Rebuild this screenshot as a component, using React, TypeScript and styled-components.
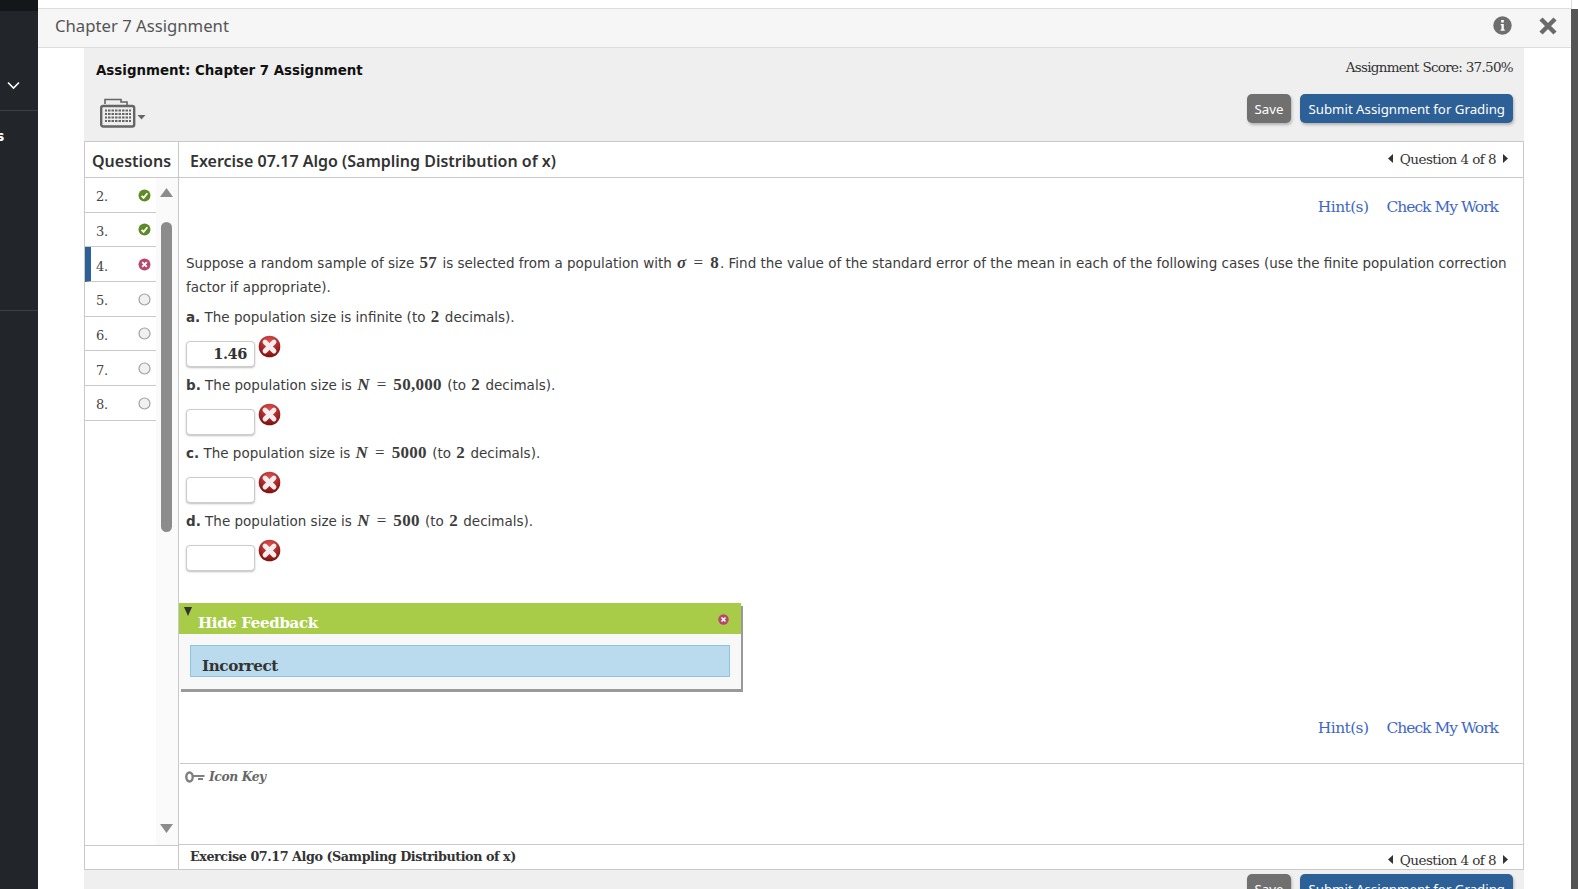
import React from "react";
import styled, { createGlobalStyle } from "styled-components";

const Global = createGlobalStyle`
  html, body { margin: 0; padding: 0; height: 889px; overflow: hidden; background: #fff; }
  * { box-sizing: border-box; }
`;

const SANS = `"Noto Sans", "Open Sans", sans-serif`;
const BODY = `"DejaVu Sans", "Noto Sans", sans-serif`;
const SERIF = `"DejaVu Serif", "Liberation Serif", serif`;
const MATHF = `"Liberation Serif", serif`;

const Shell = styled.div`display: flex; width: 1578px; height: 889px; overflow: hidden;`;
const Side = styled.aside`width: 38px; flex: none; background: #22262b; color: #fff; display: flex; flex-direction: column;`;
const SideTop = styled.div`height: 11px; background: #14171a;`;
const SideChevron = styled.div`height: 100px; border-bottom: 1px solid #3c4045; display: flex; align-items: flex-end; padding: 0 0 20px 7px; svg { display: block; }`;
const SideLabel = styled.div`height: 200px; border-bottom: 1px solid #3c4045; font: 700 14px ${BODY}; padding: 17px 0 0 0; margin-left: -4px; width: 42px;`;
const Main = styled.main`flex: 1; min-width: 0; display: flex; flex-direction: column;`;
const Strip = styled.div`width: 7px; flex: none; background: #fff; display: flex; flex-direction: column; &::after { content: ""; flex: 1; background: #555; } &::before { content: ""; height: 9px; background: #fff; border-left: 1px solid #ddd; }`;
const TopGap = styled.div`height: 8px; flex: none;`;
const TitleBar = styled.header`height: 40px; flex: none; background: #f6f6f6; border-top: 1px solid #dedede; border-bottom: 1px solid #dedede; display: flex; align-items: center; justify-content: space-between; padding: 0 14px 5px 17px;`;
const TitleText = styled.h1`margin: 0; font: 400 16.7px ${SANS}; color: #555;`;
const TitleIcons = styled.div`display: flex; align-items: center; gap: 27px; color: #6a6a6a; svg { display: block; }`;
const Content = styled.div`flex: 1; margin-left: 46px; width: 1440px; background: #efefef; display: flex; flex-direction: column;`;
const Toolbar = styled.div`height: 93px; flex: none; padding: 11px 11px 0 12px; display: grid; grid-template-columns: 1fr auto; grid-template-rows: 30px 1fr;`;
const AssignName = styled.div`font: 700 13.4px "DejaVu Sans", sans-serif; color: #111; line-height: 24px;`;
const Score = styled.div`font: 400 13.5px ${SERIF}; letter-spacing: -0.7px; color: #333; text-align: right; line-height: 17px;`;
const KeyboardBox = styled.div`display: flex; align-items: flex-start; padding: 9px 0 0 4px; svg { display: block; }`;
const Buttons = styled.div`display: flex; gap: 9px; justify-content: flex-end; padding-top: 5px; height: 34px;`;
const Btn = styled.button<{ $primary?: boolean }>`
  height: 29px; border: 0; border-radius: 5px; padding: 0 8px; color: #fff; font: 400 13.25px ${SANS};
  background: ${(p) => (p.$primary ? "#2d6097" : "#707070")}; box-shadow: 1px 2px 3px rgba(0,0,0,.25);
`;
const Panel = styled.section`height: 729px; flex: none; background: #fff; border: 1px solid #c9c9c9; display: grid; grid-template-columns: 94px 1fr; grid-template-rows: 36px 1fr;`;
const QHead = styled.div`border-right: 1px solid #c9c9c9; border-bottom: 1px solid #c9c9c9; font: 600 16px ${SANS}; color: #333; display: flex; align-items: center; padding: 2px 0 0 7px; white-space: nowrap;`;
const ExHead = styled.div`border-bottom: 1px solid #c9c9c9; display: flex; align-items: center; justify-content: space-between; padding: 2px 15px 0 11px;`;
const ExTitle = styled.h2`margin: 0; font: 600 16px ${SANS}; color: #333;`;
const Pager = styled.div`display: flex; align-items: center; gap: 7px; font: 400 13.5px ${SERIF}; letter-spacing: -0.55px; color: #333; svg { display: block; }`;
const HeadPager = styled(Pager)`margin-bottom: 4px;`;
const QCol = styled.nav`border-right: 1px solid #c9c9c9; display: flex; flex-direction: column; min-height: 0;`;
const QMain = styled.div`display: flex; flex: 1; min-height: 0;`;
const QList = styled.ul`list-style: none; margin: 0; padding: 0; width: 71px; flex: none;`;
const QRow = styled.li<{ $active?: boolean }>`
  height: 34.67px; border-bottom: 1px solid #c9c9c9; display: flex; align-items: center; justify-content: space-between;
  padding: 4px 5px 0 ${(p) => (p.$active ? "5px" : "11px")}; font: 400 13px ${SERIF}; letter-spacing: -.4px; color: #444;
  border-left: ${(p) => (p.$active ? "6px solid #2d6097" : "0")}; svg { display: block; margin-top: -3px; }
`;
const ScrollTrack = styled.div`flex: 1; background: #fafafa; display: flex; flex-direction: column; align-items: center; padding: 10px 1px 12px 0; svg { display: block; }`;
const Thumb = styled.div`width: 11px; height: 310px; border-radius: 6px; background: #8c8c8c; margin-top: 25px; flex: none;`;
const ScrollGap = styled.div`flex: 1;`;
const QFoot = styled.div`height: 24px; border-top: 1px solid #c9c9c9; flex: none;`;
const Body = styled.div`display: flex; flex-direction: column; min-height: 0;`;
const Links = styled.div<{ $top: number }>`display: flex; justify-content: flex-end; gap: 18px; padding: ${(p) => p.$top}px 25px 0 0; height: ${(p) => p.$top + 22}px; flex: none;`;
const HelpLink = styled.a`font: 400 15.5px/22px ${SERIF}; letter-spacing: -1px; color: #3f68c4; text-decoration: none;`;
const HintLink = styled(HelpLink)`letter-spacing: -.6px;`;
const Para = styled.p`margin: 33px 8px 0 7px; font: 400 13.5px/24px ${BODY}; color: #3c3c3c;`;
const Part = styled.p`margin: 0 0 0 7px; padding-top: 1px; font: 400 13.5px/24px ${BODY}; color: #3c3c3c; height: 24px;`;
const FirstPart = styled(Part)`margin-top: 5px;`;
const M = styled.span<{ $it?: boolean }>`font: ${(p) => (p.$it ? "italic 700 17px" : "700 17px")} ${MATHF}; margin: 0 1px; letter-spacing: .3px;`;
const Eq = styled.span`font: 400 17px ${MATHF}; margin: 0 6px;`;
const AnsRow = styled.div`height: 44px; flex: none; margin-left: 7px; display: flex; align-items: flex-start; gap: 3px; padding-top: 13px; svg { display: block; margin-top: -6px; }`;
const Ans = styled.div`width: 69px; height: 26px; background: #fff; border: 1px solid #ccc; border-radius: 4px; box-shadow: 0 1px 2px rgba(0,0,0,.25); font: 700 14.5px/24px "DejaVu Serif", serif; text-align: right; padding-right: 7px; color: #333; letter-spacing: -.4px;`;
const Feedback = styled.div`margin: 27px 0 0 0; width: 562px; height: 86px; flex: none; background: #f8f8f8; box-shadow: 2px 3px 0 #999; display: flex; flex-direction: column;`;
const FbHead = styled.div`height: 31px; flex: none; background: #a8cc48; display: flex; align-items: flex-end; justify-content: space-between; padding: 0 12px 0 4px; svg { display: block; }`;
const FbTitle = styled.div`display: flex; gap: 5px; align-items: flex-start; font: 700 15px/22px ${SERIF}; letter-spacing: -.35px; color: #fff; svg { margin-top: -5px; } `;
const FbClose = styled.span`display: block; margin-bottom: 9px;`;
const FbBody = styled.div`margin: 11px 11px 0 11px; height: 32px; background: #b9dbed; border: 1px solid #8cc4e3; font: 700 15.2px/40px ${SERIF}; letter-spacing: -.4px; color: #333; padding-left: 11px; overflow: hidden;`;
const KeyRow = styled.div`margin: 24px 0 0 1px; border-top: 1px solid #c9c9c9; height: 81px; flex: none; padding: 4px 0 0 5px; display: flex; align-items: flex-start; gap: 4px; color: #666; font: italic 700 12.3px/18px ${SERIF}; letter-spacing: -.4px; svg { display: block; margin-top: 3px; }`;
const Foot = styled.div`border-top: 1px solid #c9c9c9; height: 25px; flex: none; display: flex; justify-content: space-between; padding: 0 15px 0 11px;`;
const FootTitle = styled.div`font: 700 12.75px/24px ${SERIF}; letter-spacing: -.45px; color: #333;`;
const FootPager = styled(Pager)`padding-top: 5px;`;
const BottomBar = styled.div`margin-top: -1px; padding: 0 11px 0 0; overflow: hidden; flex: 1; min-height: 0;`;

const Check = () => (
  <svg width="13" height="13" viewBox="0 0 13 13"><circle cx="6.5" cy="6.5" r="6" fill="#5f8a24" /><path d="M3.6 6.8l2 2 3.800-4.600" fill="none" stroke="#fff" strokeWidth="1.800" /></svg>
);
const Wrong = () => (
  <svg width="13" height="13" viewBox="0 0 13 13"><circle cx="6.5" cy="6.5" r="6" fill="#b5486e" /><path d="M4.200 4.200l4.600 4.600M8.800 4.200l-4.600 4.600" stroke="#fff" strokeWidth="1.800" /></svg>
);
const Empty = () => (
  <svg width="13" height="13" viewBox="0 0 13 13"><circle cx="6.5" cy="6.5" r="5.500" fill="#f0f0f0" stroke="#a0a0a0" strokeWidth="1.200" /></svg>
);
const RedX = () => (
  <svg width="23" height="23" viewBox="0 0 23 23">
    <defs><radialGradient id="rx" cx="50%" cy="25%" r="80%"><stop offset="0" stopColor="#e05050" /><stop offset="1" stopColor="#780a0a" /></radialGradient></defs>
    <circle cx="11.500" cy="11.500" r="10.800" fill="url(#rx)" />
    <path d="M7 7l9 9M16 7l-9 9" stroke="#f6eeee" strokeWidth="4.800" strokeLinecap="round" />
  </svg>
);
const TriL = () => <svg width="5" height="9" viewBox="0 0 5 9"><path d="M5 0v9L0 4.500z" fill="#333" /></svg>;
const TriR = () => <svg width="5" height="9" viewBox="0 0 5 9"><path d="M0 0v9l5-4.500z" fill="#333" /></svg>;
const Keyboard = () => (
  <svg width="47" height="31" viewBox="0 0 47 31" fill="none">
    <path d="M5 6V1.500h16V4h6v3" stroke="#666" strokeWidth="1.600" />
    <rect x="1.200" y="8" width="33" height="20.500" rx="2" stroke="#666" strokeWidth="2.400" fill="#eee" />
    <path d="M5 12.500h26M5 16h26M5 19.500h26M5 23h26" stroke="#666" strokeWidth="2" />
    <path d="M7.500 11v13M11 11v13M14.500 11v13M18 11v13M21.500 11v13M25 11v13M28.500 11v13" stroke="#eee" strokeWidth="1" />
    <path d="M37.500 17h8l-4 4.500z" fill="#666" />
  </svg>
);
const Key = () => (
  <svg width="20" height="12" viewBox="0 0 20 12" fill="none"><ellipse cx="4.500" cy="6" rx="3.200" ry="4.500" stroke="#808080" strokeWidth="2.400" /><path d="M7.500 5h12M13 8h5" stroke="#808080" strokeWidth="2" /></svg>
);

const qs: { n: number; s: "ok" | "bad" | "none" }[] = [
  { n: 2, s: "ok" }, { n: 3, s: "ok" }, { n: 4, s: "bad" }, { n: 5, s: "none" }, { n: 6, s: "none" }, { n: 7, s: "none" }, { n: 8, s: "none" },
];

const Actions = () => (
  <Buttons>
    <Btn>Save</Btn>
    <Btn $primary>Submit Assignment for Grading</Btn>
  </Buttons>
);

export default function App() {
  return (
    <Shell>
      <Global />
      <Side>
        <SideTop />
        <SideChevron>
          <svg width="13" height="9" viewBox="0 0 13 9" fill="none"><path d="M1 1.500L6.500 7 12 1.500" stroke="#fff" strokeWidth="1.600" /></svg>
        </SideChevron>
        <SideLabel>s</SideLabel>
      </Side>
      <Main>
        <TopGap />
        <TitleBar>
          <TitleText>Chapter 7 Assignment</TitleText>
          <TitleIcons>
            <svg width="19" height="19" viewBox="0 0 19 19"><circle cx="9.500" cy="9.500" r="9.200" fill="#6e6e6e" /><path d="M8.200 4h2.600v2.500H8.200zM7.700 8h3.100v5.400h1v1.300H7.500v-1.300h1V9.300h-.8z" fill="#fff" /></svg>
            <svg width="18" height="18" viewBox="0 0 18 18"><path d="M2 2l14 14M16 2L2 16" stroke="#6a6a6a" strokeWidth="4.400" /></svg>
          </TitleIcons>
        </TitleBar>
        <Content>
          <Toolbar>
            <AssignName>Assignment: Chapter 7 Assignment</AssignName>
            <Score>Assignment Score: 37.50%</Score>
            <KeyboardBox><Keyboard /></KeyboardBox>
            <Actions />
          </Toolbar>
          <Panel>
            <QHead>Questions</QHead>
            <ExHead>
              <ExTitle>Exercise 07.17 Algo (Sampling Distribution of x)</ExTitle>
              <HeadPager><TriL /> Question 4 of 8 <TriR /></HeadPager>
            </ExHead>
            <QCol>
              <QMain>
                <QList>
                  {qs.map((q) => (
                    <QRow key={q.n} $active={q.s === "bad"}>
                      {q.n}.
                      {q.s === "ok" ? <Check /> : q.s === "bad" ? <Wrong /> : <Empty />}
                    </QRow>
                  ))}
                </QList>
                <ScrollTrack>
                  <svg width="13" height="9" viewBox="0 0 13 9"><path d="M6.500 0L13 9H0z" fill="#8c8c8c" /></svg>
                  <Thumb />
                  <ScrollGap />
                  <svg width="13" height="9" viewBox="0 0 13 9"><path d="M6.500 9L13 0H0z" fill="#8c8c8c" /></svg>
                </ScrollTrack>
              </QMain>
              <QFoot />
            </QCol>
            <Body>
              <Links $top={18}><HintLink>Hint(s)</HintLink><HelpLink>Check My Work</HelpLink></Links>
              <Para>
                Suppose a random sample of size <M>57</M> is selected from a population with <M $it>σ</M><Eq>=</Eq><M>8</M>. Find the value of the standard error of the mean in each of the following cases (use the finite population correction factor if appropriate).
              </Para>
              <FirstPart><b>a.</b> The population size is infinite (to <M>2</M> decimals).</FirstPart>
              <AnsRow><Ans>1.46</Ans><RedX /></AnsRow>
              <Part><b>b.</b> The population size is <M $it>N</M><Eq>=</Eq><M>50,000</M> (to <M>2</M> decimals).</Part>
              <AnsRow><Ans /><RedX /></AnsRow>
              <Part><b>c.</b> The population size is <M $it>N</M><Eq>=</Eq><M>5000</M> (to <M>2</M> decimals).</Part>
              <AnsRow><Ans /><RedX /></AnsRow>
              <Part><b>d.</b> The population size is <M $it>N</M><Eq>=</Eq><M>500</M> (to <M>2</M> decimals).</Part>
              <AnsRow><Ans /><RedX /></AnsRow>
              <Feedback>
                <FbHead>
                  <FbTitle>
                    <svg width="10" height="10" viewBox="0 0 10 10"><path d="M1 0h8L5 9z" fill="#333" /></svg>
                    Hide Feedback
                  </FbTitle>
                  <FbClose>
                    <svg width="11" height="11" viewBox="0 0 11 11"><circle cx="5.500" cy="5.500" r="5.200" fill="#b5486e" /><path d="M3.500 3.500l4 4M7.500 3.500l-4 4" stroke="#fff" strokeWidth="1.600" /></svg>
                  </FbClose>
                </FbHead>
                <FbBody>Incorrect</FbBody>
              </Feedback>
              <Links $top={28}><HintLink>Hint(s)</HintLink><HelpLink>Check My Work</HelpLink></Links>
              <KeyRow><Key /> Icon Key</KeyRow>
              <Foot>
                <FootTitle>Exercise 07.17 Algo (Sampling Distribution of x)</FootTitle>
                <FootPager><TriL /> Question 4 of 8 <TriR /></FootPager>
              </Foot>
            </Body>
          </Panel>
          <BottomBar>
            <Actions />
          </BottomBar>
        </Content>
      </Main>
      <Strip />
    </Shell>
  );
}
